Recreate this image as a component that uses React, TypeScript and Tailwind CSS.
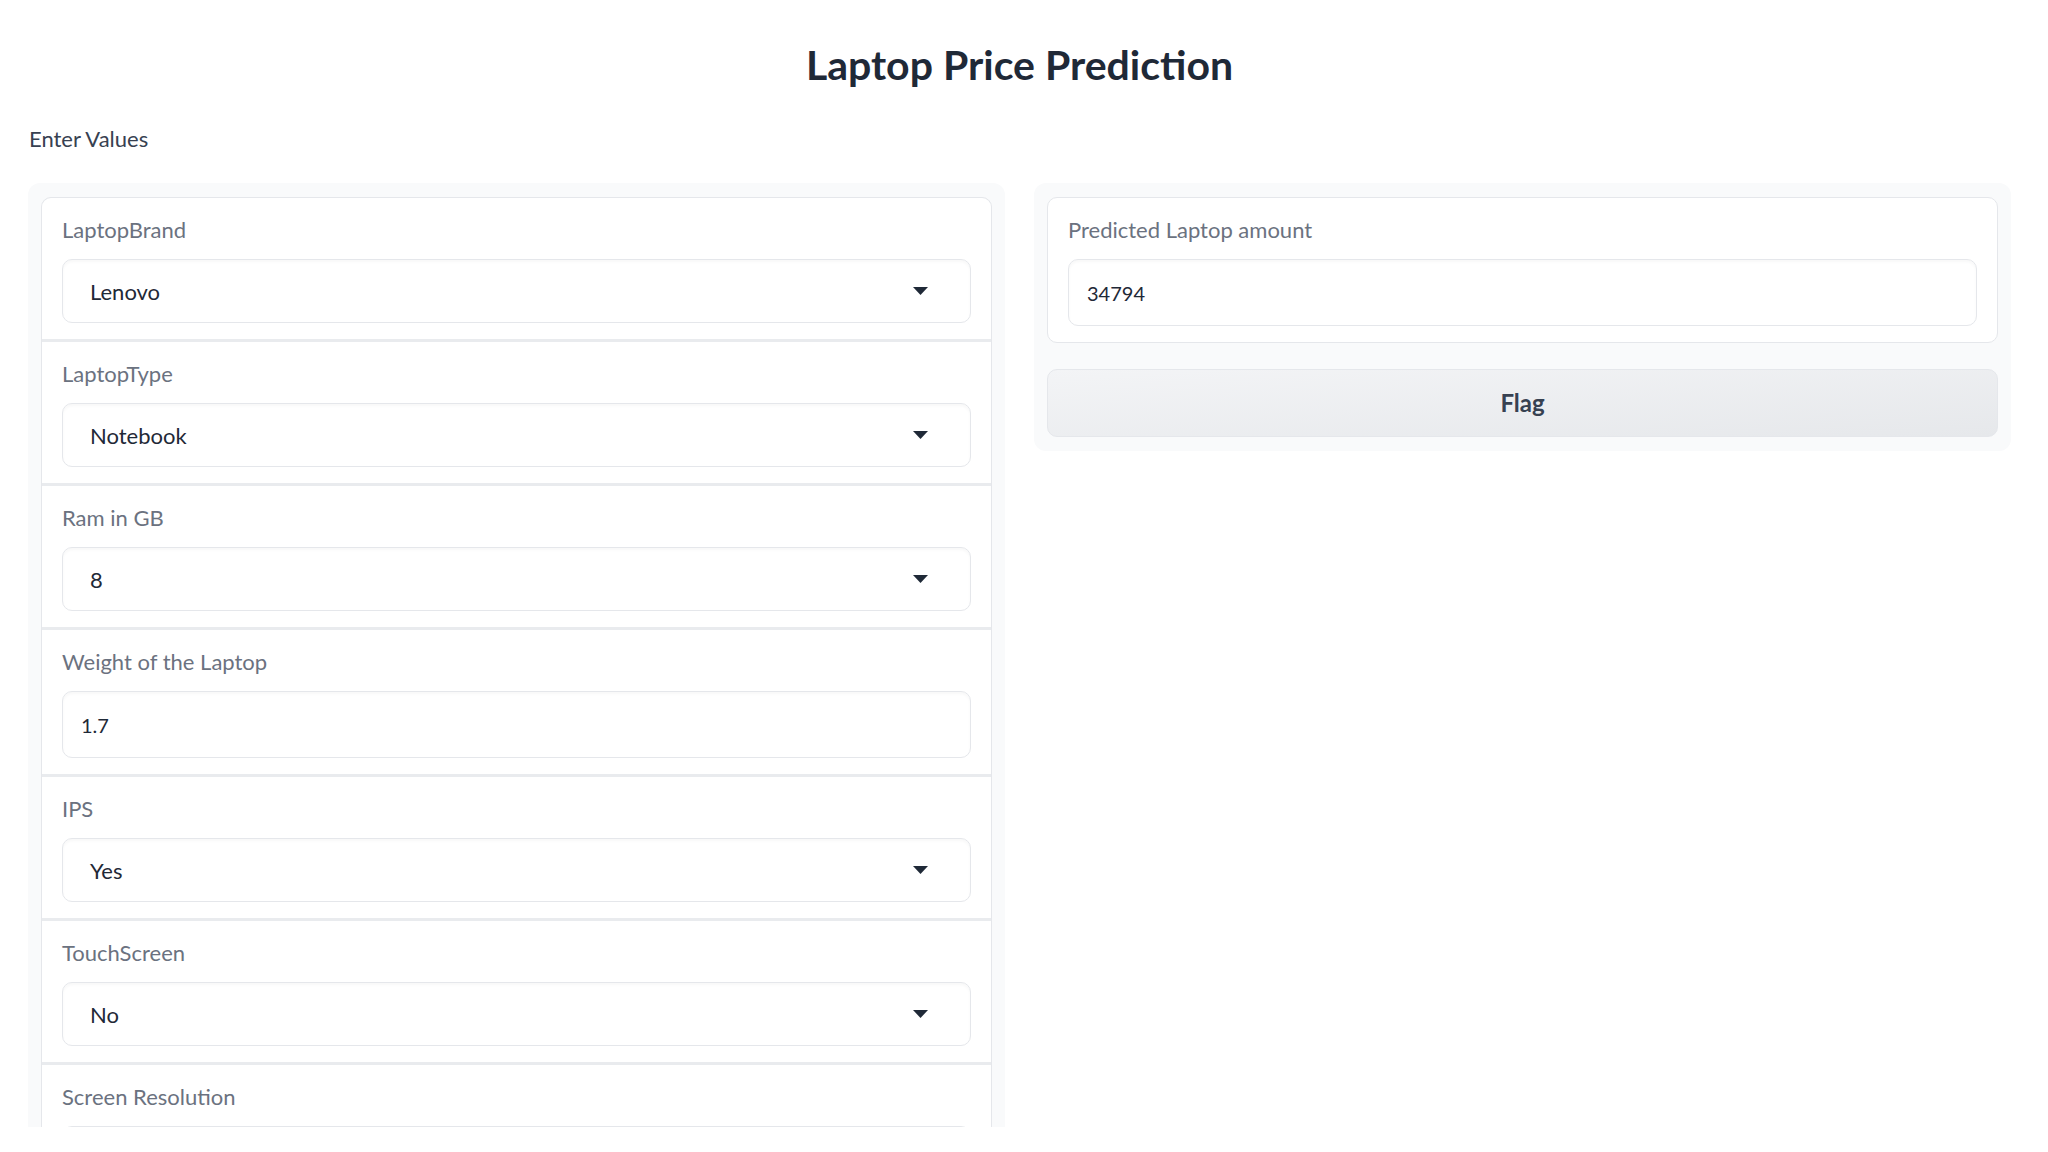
import React from 'react';

type Field = {
  label: string;
  value: string;
  kind: 'dropdown' | 'textbox';
};

const fields: Field[] = [
  { label: 'LaptopBrand', value: 'Lenovo', kind: 'dropdown' },
  { label: 'LaptopType', value: 'Notebook', kind: 'dropdown' },
  { label: 'Ram in GB', value: '8', kind: 'dropdown' },
  { label: 'Weight of the Laptop', value: '1.7', kind: 'textbox' },
  { label: 'IPS', value: 'Yes', kind: 'dropdown' },
  { label: 'TouchScreen', value: 'No', kind: 'dropdown' },
  // only the top edge of this one is on screen
  { label: 'Screen Resolution', value: '', kind: 'dropdown' },
];

const Caret: React.FC = () => (
  <svg width="15" height="8" viewBox="0 0 15 8" className="shrink-0">
    <polygon points="0,0 15,0 7.5,8" fill="#1f2937" />
  </svg>
);

const Dropdown: React.FC<{ value: string }> = ({ value }) => (
  <div className="flex h-[64px] items-center justify-between rounded-[10px] border border-[#e5e7eb] bg-white pl-[27px] pr-[42px] text-[22px] text-[#1f2937] shadow-[inset_0_2px_3px_rgba(0,0,0,0.03)]">
    <span>{value}</span>
    <Caret />
  </div>
);

const Textbox: React.FC<{ value: string }> = ({ value }) => (
  <div className="flex h-[67px] items-center rounded-[10px] border border-[#e5e7eb] bg-white pl-[18px] text-[20px] text-[#1f2937] shadow-[inset_0_2px_3px_rgba(0,0,0,0.03)]">
    {value}
  </div>
);

const Label: React.FC<{ children: React.ReactNode }> = ({ children }) => (
  <div className="mb-[15px] text-[22px] leading-[28px] text-[#6b7280]">{children}</div>
);

const App: React.FC = () => {
  return (
    <div className="h-[1127px] overflow-hidden bg-white pl-[28px] pr-[37px] font-['Lato','Open_Sans',sans-serif]">
      <h1 className="pt-[40px] text-center text-[41px] font-bold leading-[50px] text-[#1f2937]">
        Laptop Price Prediction
      </h1>

      <div className="mt-[35px] pl-[1px] text-[22px] leading-[28px] text-[#374151]">Enter Values</div>

      <div className="mt-[30px] flex items-start gap-[29px]">
        {/* Inputs */}
        <div className="flex-1 rounded-[12px] bg-[#f9fafb] px-[13px] py-[14px]">
          <div className="flex flex-col gap-[3px] overflow-hidden rounded-[10px] border border-[#e5e7eb] bg-[#e9ebee]">
            {fields.map((f) => (
              <div key={f.label} className="bg-white px-[20px] pb-[16px] pt-[18px]">
                <Label>{f.label}</Label>
                {f.kind === 'dropdown' ? <Dropdown value={f.value} /> : <Textbox value={f.value} />}
              </div>
            ))}
          </div>
        </div>

        {/* Output */}
        <div className="flex-1 rounded-[12px] bg-[#f9fafb] px-[13px] py-[14px]">
          <div className="rounded-[10px] border border-[#e5e7eb] bg-white px-[20px] pb-[16px] pt-[18px]">
            <Label>Predicted Laptop amount</Label>
            <Textbox value="34794" />
          </div>
          <button className="mt-[26px] h-[68px] w-full rounded-[10px] border border-[#e5e7eb] bg-gradient-to-br from-[#f3f4f6] to-[#e6e8eb] text-[24px] font-bold text-[#374151]">
            Flag
          </button>
        </div>
      </div>
    </div>
  );
};

export default App;
